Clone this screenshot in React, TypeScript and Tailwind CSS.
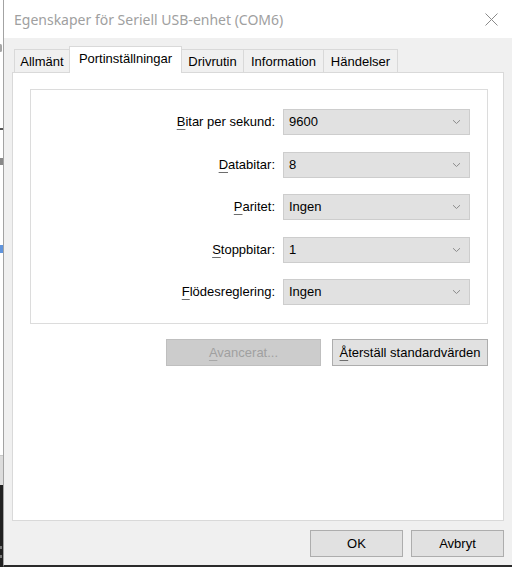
import React from "react";

const Chevron = () => (
  <svg width="9" height="6" viewBox="0 0 9 6" className="shrink-0">
    <path d="M1 1.2 L4.5 4.5 L8 1.2" fill="none" stroke="#8c8c8c" strokeWidth="1" />
  </svg>
);

const U = ({ c }: { c: string }) => (
  <span className="underline underline-offset-[3px] decoration-[#6d6d6d]">{c}</span>
);

const Row = ({ k, rest, value }: { k: string; rest: string; value: string }) => (
  <div className="flex items-center h-[26px] pr-[17px]">
    <div className="flex-1 text-right text-black">
      <U c={k} />
      {rest}
    </div>
    <div className="ml-[8px] w-[187px] h-[26px] bg-[#e1e1e1] border border-[#cdcdcd] flex items-center pl-[5px] pr-[8px] justify-between">
      <span className="text-black">{value}</span>
      <Chevron />
    </div>
  </div>
);

export default function App() {
  return (
    <div
      className="w-[512px] h-[567px] flex overflow-hidden bg-white text-[13px]"
      style={{ fontFamily: '"Liberation Sans", Arial, sans-serif' }}
    >
      {/* background application strip */}
      <div className="w-[3px] flex flex-col overflow-hidden">
        <div className="h-[455px] bg-white flex flex-col">
          <div className="h-[44px]" />
          <div className="h-[8px] w-[3px] bg-[#6b6b6b] ml-[-1px] rounded-sm opacity-60" />
          <div className="h-[76px]" />
          <div className="h-[2px] w-[3px] bg-[#555]" />
          <div className="h-[28px]" />
          <div className="h-[7px] w-[3px] bg-[#555] opacity-70" />
          <div className="h-[80px]" />
          <div className="h-[8px] w-[3px] bg-[#3a7bd5] opacity-80" />
        </div>
        <div className="h-px bg-[#c8c8c8]" />
        <div className="h-[29px] bg-[#dcdcdc]" />
        <div className="flex-1 bg-[#202020] flex flex-col">
          <div className="h-[61px]" />
          <div className="h-[3px] w-[2px] bg-[#777]" />
          <div className="h-[6px]" />
          <div className="h-[3px] w-[2px] bg-[#777]" />
        </div>
      </div>

      {/* window */}
      <div className="flex-1 flex flex-col border-l border-[#a3a3a3] border-b-2 border-b-[#2a2a2a]">
        {/* title bar */}
        <div className="h-[38px] bg-white flex items-center justify-between pl-[10px] pr-[14px] shrink-0">
          <span
            className="text-[14px] text-[#a0a0a0]"
            style={{ fontFamily: '"Noto Sans", "Open Sans", sans-serif' }}
          >
            Egenskaper för Seriell USB-enhet (COM6)
          </span>
          <svg width="13" height="13" viewBox="0 0 13 13">
            <path d="M0.5 0.5 L12.5 12.5 M12.5 0.5 L0.5 12.5" stroke="#8a8a8a" strokeWidth="1" />
          </svg>
        </div>

        {/* body */}
        <div className="flex-1 bg-[#f0f0f0] px-[8px] pt-[8px] flex flex-col">
          {/* tabs */}
          <div className="h-[26px] flex items-end pl-[2px] shrink-0">
            <div className="w-[55px] h-[23px] border-l border-t border-[#d9d9d9] bg-[#f0f0f0] flex items-center justify-center pt-[1px]">
              Allmänt
            </div>
            <div className="relative z-10 -mb-px w-[113px] h-[27px] border-l border-r border-t border-[#d9d9d9] bg-white flex items-center justify-center pb-[3px]">
              Portinställningar
            </div>
            <div className="w-[61px] h-[23px] border-t border-[#d9d9d9] bg-[#f0f0f0] flex items-center justify-center pt-[1px]">
              Drivrutin
            </div>
            <div className="w-[80px] h-[23px] border-l border-t border-[#d9d9d9] bg-[#f0f0f0] flex items-center justify-center pt-[1px]">
              Information
            </div>
            <div className="w-[75px] h-[23px] border-l border-r border-t border-[#d9d9d9] bg-[#f0f0f0] flex items-center justify-center pt-[1px]">
              Händelser
            </div>
          </div>

          {/* tab page */}
          <div className="h-[449px] bg-white border border-[#d9d9d9] pt-[16px] pl-[17px] shrink-0">
            <div className="w-[458px] border border-[#dcdcdc] pt-[19px] pb-[18px] flex flex-col gap-[16.5px]">
              <Row k="B" rest="itar per sekund:" value="9600" />
              <Row k="D" rest="atabitar:" value="8" />
              <Row k="P" rest="aritet:" value="Ingen" />
              <Row k="S" rest="toppbitar:" value="1" />
              <Row k="F" rest="lödesreglering:" value="Ingen" />
            </div>
            <div className="w-[458px] mt-[15px] flex justify-end gap-[11px]">
              <div className="w-[155px] h-[27px] bg-[#cccccc] border border-[#bfbfbf] flex items-center justify-center text-[#a0a0a0]">
                <span>
                  <span className="underline underline-offset-[3px] decoration-[#a8a8a8]">A</span>vancerat...
                </span>
              </div>
              <div className="w-[156px] h-[27px] bg-[#e1e1e1] border border-[#adadad] flex items-center justify-center text-black">
                <span>
                  <U c="Å" />
                  terställ standardvärden
                </span>
              </div>
            </div>
          </div>

          {/* dialog buttons */}
          <div className="mt-[9px] flex justify-end gap-[8px] shrink-0">
            <div className="w-[93px] h-[27px] bg-[#e1e1e1] border border-[#adadad] flex items-center justify-center text-black">
              OK
            </div>
            <div className="w-[93px] h-[27px] bg-[#e1e1e1] border border-[#adadad] flex items-center justify-center text-black">
              Avbryt
            </div>
          </div>
        </div>
      </div>
    </div>
  );
}
